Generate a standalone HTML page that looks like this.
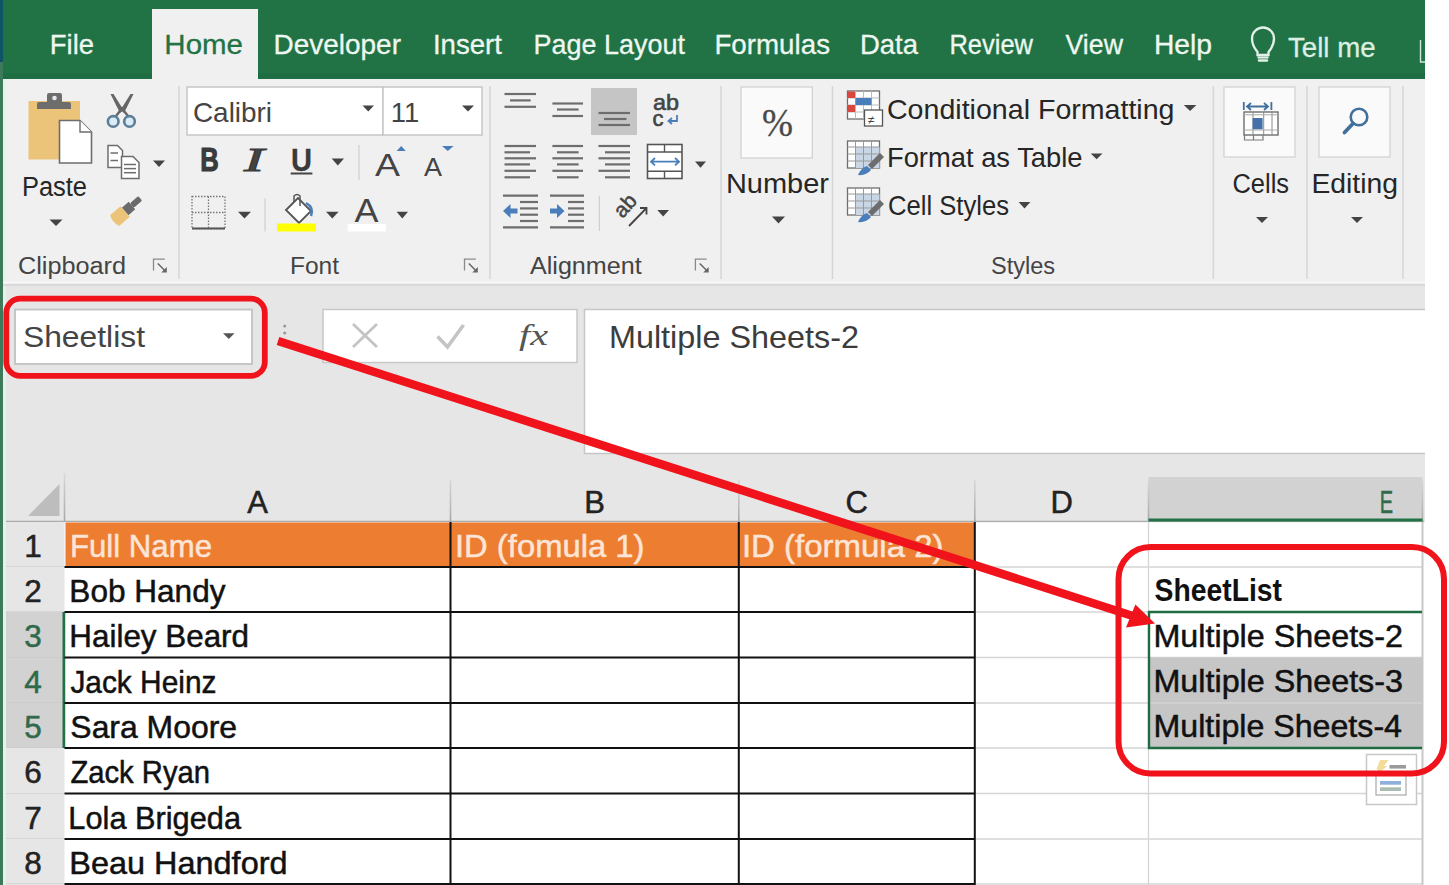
<!DOCTYPE html>
<html><head><meta charset="utf-8"><style>
html,body{margin:0;padding:0;background:#fff;width:1449px;height:885px;overflow:hidden}
svg{display:block}
text{font-family:"Liberation Sans", sans-serif;}
</style></head><body>
<svg width="1449" height="885" viewBox="0 0 1449 885">
<defs><linearGradient id="sepg" x1="0" y1="0" x2="0" y2="1"><stop offset="0" stop-color="#d8d8d8"/><stop offset="1" stop-color="#a8a8a8"/></linearGradient></defs>
<rect x="0" y="0" width="1449" height="885" fill="#ffffff" />
<rect x="0" y="0" width="1425" height="79" fill="#217346" />
<rect x="0" y="0" width="3" height="62" fill="#0f5466" />
<rect x="3" y="73" width="1422" height="6" fill="#1f6d42" />
<rect x="152" y="9" width="106" height="70" fill="#f0f0f0" />
<text x="49.84" y="53.5" font-size="28.5" fill="#eef7f0" font-weight="normal" text-anchor="start" textLength="44.24" lengthAdjust="spacingAndGlyphs"  style="stroke:#eef7f0;stroke-width:0.3">File</text>
<text x="273.46" y="53.5" font-size="28.5" fill="#eef7f0" font-weight="normal" text-anchor="start" textLength="127.54" lengthAdjust="spacingAndGlyphs"  style="stroke:#eef7f0;stroke-width:0.3">Developer</text>
<text x="432.95" y="53.5" font-size="28.5" fill="#eef7f0" font-weight="normal" text-anchor="start" textLength="69.04" lengthAdjust="spacingAndGlyphs"  style="stroke:#eef7f0;stroke-width:0.3">Insert</text>
<text x="533.46" y="53.5" font-size="28.5" fill="#eef7f0" font-weight="normal" text-anchor="start" textLength="151.54" lengthAdjust="spacingAndGlyphs"  style="stroke:#eef7f0;stroke-width:0.3">Page Layout</text>
<text x="714.42" y="53.5" font-size="28.5" fill="#eef7f0" font-weight="normal" text-anchor="start" textLength="115.6" lengthAdjust="spacingAndGlyphs"  style="stroke:#eef7f0;stroke-width:0.3">Formulas</text>
<text x="859.93" y="53.5" font-size="28.5" fill="#eef7f0" font-weight="normal" text-anchor="start" textLength="58.07" lengthAdjust="spacingAndGlyphs"  style="stroke:#eef7f0;stroke-width:0.3">Data</text>
<text x="949.46" y="53.5" font-size="28.5" fill="#eef7f0" font-weight="normal" text-anchor="start" textLength="83.54" lengthAdjust="spacingAndGlyphs"  style="stroke:#eef7f0;stroke-width:0.3">Review</text>
<text x="1065.5" y="53.5" font-size="28.5" fill="#eef7f0" font-weight="normal" text-anchor="start" textLength="57.5" lengthAdjust="spacingAndGlyphs"  style="stroke:#eef7f0;stroke-width:0.3">View</text>
<text x="1153.89" y="53.5" font-size="28.5" fill="#eef7f0" font-weight="normal" text-anchor="start" textLength="58.12" lengthAdjust="spacingAndGlyphs"  style="stroke:#eef7f0;stroke-width:0.3">Help</text>
<text x="164.39" y="53.5" font-size="28.5" fill="#217346" font-weight="normal" text-anchor="start" textLength="78.65" lengthAdjust="spacingAndGlyphs"  style="stroke:#217346;stroke-width:0.3">Home</text>
<text x="1287.99" y="57.3" font-size="28.5" fill="#dcefe2" font-weight="normal" text-anchor="start" textLength="87.54" lengthAdjust="spacingAndGlyphs"  style="stroke:#dcefe2;stroke-width:0.3">Tell me</text>
<rect x="3" y="79" width="1422" height="204" fill="#f0f0f0" />
<rect x="0" y="62" width="3" height="823" fill="#3d7a5c" />
<rect x="3" y="79" width="3" height="806" fill="#e4f2ea" />
<rect x="6" y="283" width="1419" height="239" fill="#e6e6e6" />
<line x1="3" y1="282.5" x2="1425" y2="282.5" stroke="#f7f7f7" stroke-width="2" />
<line x1="3" y1="285" x2="1425" y2="285" stroke="#d6d6d6" stroke-width="1.6" />
<line x1="179" y1="86" x2="179" y2="279" stroke="#d6d6d6" stroke-width="1.5" />
<line x1="490" y1="86" x2="490" y2="279" stroke="#d6d6d6" stroke-width="1.5" />
<line x1="721" y1="86" x2="721" y2="279" stroke="#d6d6d6" stroke-width="1.5" />
<line x1="832.5" y1="86" x2="832.5" y2="279" stroke="#d6d6d6" stroke-width="1.5" />
<line x1="1213.3" y1="86" x2="1213.3" y2="279" stroke="#d6d6d6" stroke-width="1.5" />
<line x1="1307" y1="86" x2="1307" y2="279" stroke="#d6d6d6" stroke-width="1.5" />
<line x1="1403" y1="86" x2="1403" y2="279" stroke="#d6d6d6" stroke-width="1.5" />
<text x="17.95" y="274" font-size="23.5" fill="#444" font-weight="normal" text-anchor="start" textLength="108.07" lengthAdjust="spacingAndGlyphs"  style="">Clipboard</text>
<text x="289.91" y="274" font-size="23.5" fill="#444" font-weight="normal" text-anchor="start" textLength="49.09" lengthAdjust="spacingAndGlyphs"  style="">Font</text>
<text x="530.0" y="274" font-size="23.5" fill="#444" font-weight="normal" text-anchor="start" textLength="111.6" lengthAdjust="spacingAndGlyphs"  style="">Alignment</text>
<text x="990.94" y="274" font-size="23.5" fill="#444" font-weight="normal" text-anchor="start" textLength="64.11" lengthAdjust="spacingAndGlyphs"  style="">Styles</text>
<path d="M153.5,270.5 V259.2 H164.8" stroke="#8a8a8a" stroke-width="1.3" fill="none"/>
<path d="M157.8,263.5 L164.8,270.5" stroke="#666" stroke-width="1.5"/>
<polygon points="166.8,267.0 166.8,272.5 161.3,272.5" fill="#666"/>
<path d="M464.5,270.5 V259.2 H475.8" stroke="#8a8a8a" stroke-width="1.3" fill="none"/>
<path d="M468.8,263.5 L475.8,270.5" stroke="#666" stroke-width="1.5"/>
<polygon points="477.8,267.0 477.8,272.5 472.3,272.5" fill="#666"/>
<path d="M695.4000000000001,270.5 V259.2 H706.7" stroke="#8a8a8a" stroke-width="1.3" fill="none"/>
<path d="M699.7,263.5 L706.7,270.5" stroke="#666" stroke-width="1.5"/>
<polygon points="708.7,267.0 708.7,272.5 703.2,272.5" fill="#666"/>
<rect x="28.5" y="101" width="51.5" height="58.5" fill="#ebc47a" />
<path d="M37,109 V104 Q37,102 39,102 H47 V95 Q47,93 49,93 H60 Q62,93 62,95 V102 H69 Q71,102 71,104 V109 Z" fill="#6d6d6d"/>
<circle cx="54.5" cy="98" r="2.3" fill="#e8e8e8"/>
<path d="M59.5,120.5 H80 L91.5,132 V163 H59.5 Z" fill="#ffffff" stroke="#6d6d6d" stroke-width="1.6"/>
<path d="M80,120.5 V132 H91.5" fill="#ffffff" stroke="#6d6d6d" stroke-width="1.4"/>
<text x="21.9" y="196" font-size="27" fill="#262626" font-weight="normal" text-anchor="start" textLength="65.15" lengthAdjust="spacingAndGlyphs"  style="">Paste</text>
<polygon points="49.5,219.5 62.5,219.5 56.0,226" fill="#444"/>
<path d="M110.5,94 L113.5,94 L123.5,110 L120,113 Z" fill="#666"/>
<path d="M133.5,94 L130.5,94 L120.5,110 L124,113 Z" fill="#666"/>
<path d="M116,116 L122,108.5 L128,116" fill="none" stroke="#666" stroke-width="2.4"/>
<circle cx="113.2" cy="121.4" r="5.3" fill="#dcecf7" stroke="#5b7f99" stroke-width="2.6"/>
<circle cx="129.5" cy="121.4" r="5.3" fill="#dcecf7" stroke="#5b7f99" stroke-width="2.6"/>
<path d="M108,145.5 H117.5 L122.5,150.5 V167.5 H108 Z" fill="#fff" stroke="#6d6d6d" stroke-width="1.5"/>
<path d="M121.5,156.5 H133 L139,162.5 V178.5 H121.5 Z" fill="#fff" stroke="#6d6d6d" stroke-width="1.5"/>
<line x1="110.5" y1="153" x2="118" y2="153" stroke="#6d6d6d" stroke-width="1.5" />
<line x1="110.5" y1="160.5" x2="118" y2="160.5" stroke="#6d6d6d" stroke-width="1.5" />
<line x1="124" y1="164.5" x2="136" y2="164.5" stroke="#6d6d6d" stroke-width="1.5" />
<line x1="124" y1="168.6" x2="136" y2="168.6" stroke="#6d6d6d" stroke-width="1.5" />
<line x1="124" y1="172.7" x2="136" y2="172.7" stroke="#6d6d6d" stroke-width="1.5" />
<polygon points="153,160.5 165,160.5 159.0,167" fill="#444"/>
<g transform="translate(139.5,199) rotate(139)"><rect x="-1" y="-3" width="11" height="6" rx="1.5" fill="#6a6a6a"/><rect x="10" y="-5" width="9" height="10" fill="#6a6a6a"/><path d="M19,-7 H33 Q36,0 33,7 H19 Z" fill="#ebc47a"/></g>
<rect x="187" y="87" width="196" height="48" fill="#ffffff" stroke="#c6c6c6" stroke-width="1.5" />
<rect x="383" y="87" width="99" height="48" fill="#ffffff" stroke="#c6c6c6" stroke-width="1.5" />
<text x="192.96" y="121.7" font-size="28.5" fill="#444" font-weight="normal" text-anchor="start" textLength="79.12" lengthAdjust="spacingAndGlyphs"  style="">Calibri</text>
<text x="390.73" y="121.7" font-size="28.5" fill="#444" font-weight="normal" text-anchor="start" textLength="28.41" lengthAdjust="spacingAndGlyphs"  style="">11</text>
<polygon points="362.5,105.5 374,105.5 368.25,111.5" fill="#444"/>
<polygon points="462,105.5 474,105.5 468.0,111.5" fill="#444"/>
<text x="200.3" y="171.3" font-size="33.5" fill="#3a3a3a" font-weight="bold" text-anchor="start" textLength="18.5" lengthAdjust="spacingAndGlyphs"  style="stroke:#3a3a3a;stroke-width:1.1">B</text>
<text x="244" y="171" font-size="33" fill="#444" font-family='"Liberation Sans", sans-serif' font-style="italic" textLength="20" lengthAdjust="spacingAndGlyphs" style="font-family:'Liberation Serif',serif;stroke:#3a3a3a;stroke-width:1">I</text>
<text x="291" y="171" font-size="31.5" fill="#3a3a3a" font-weight="bold" text-anchor="start" textLength="21" lengthAdjust="spacingAndGlyphs"  style="stroke:#3a3a3a;stroke-width:0.3">U</text>
<line x1="290.7" y1="173.5" x2="312.4" y2="173.5" stroke="#444" stroke-width="2" />
<polygon points="331.7,158.6 344,158.6 337.85,165.4" fill="#444"/>
<line x1="359" y1="145" x2="359" y2="180" stroke="#cfcfcf" stroke-width="1.2" />
<text x="375" y="175.7" font-size="31" fill="#444" font-weight="normal" text-anchor="start" textLength="25" lengthAdjust="spacingAndGlyphs"  style="">A</text>
<polygon points="396.6,151 405.8,151 401.2,146" fill="#4a7ebb"/>
<text x="424" y="175.7" font-size="26" fill="#444" font-weight="normal" text-anchor="start" textLength="18" lengthAdjust="spacingAndGlyphs"  style="">A</text>
<polygon points="442,146 453.6,146 447.8,151" fill="#4a7ebb"/>
<rect x="192" y="196.5" width="33" height="32" fill="none" stroke="#777" stroke-width="1.3" stroke-dasharray="1.5,1.5"/>
<line x1="208.5" y1="196.5" x2="208.5" y2="228.5" stroke="#777" stroke-width="1.3" stroke-dasharray="1.5,1.5"/>
<line x1="192" y1="212.5" x2="225" y2="212.5" stroke="#777" stroke-width="1.3" stroke-dasharray="1.5,1.5"/>
<line x1="192" y1="228.5" x2="225" y2="228.5" stroke="#555" stroke-width="1.8" />
<polygon points="238,211.7 251,211.7 244.5,218.5" fill="#444"/>
<line x1="265" y1="198.5" x2="265" y2="231.5" stroke="#cfcfcf" stroke-width="1.2" />
<path d="M286,210 L298,198 L311,211 L299,223 Z" fill="#fff" stroke="#555" stroke-width="1.8"/>
<path d="M294,202 V196 Q297,193 300,196 V206" fill="none" stroke="#555" stroke-width="1.5"/>
<path d="M306,203 Q314,207 311,216" fill="none" stroke="#4a7ebb" stroke-width="2.5"/>
<rect x="277" y="223.5" width="39" height="8" fill="#ffff00" />
<polygon points="326,211.7 338.6,211.7 332.3,218.5" fill="#444"/>
<text x="354.5" y="222.4" font-size="33" fill="#444" font-weight="normal" text-anchor="start" textLength="24" lengthAdjust="spacingAndGlyphs"  style="">A</text>
<rect x="347.7" y="224" width="38.3" height="7.5" fill="#ffffff" />
<polygon points="396.6,211.7 408,211.7 402.3,218.5" fill="#444"/>
<line x1="504.5" y1="94" x2="536" y2="94" stroke="#6d6d6d" stroke-width="2.2" />
<line x1="510" y1="100.4" x2="530.7" y2="100.4" stroke="#6d6d6d" stroke-width="2.2" />
<line x1="504.5" y1="106.8" x2="536" y2="106.8" stroke="#6d6d6d" stroke-width="2.2" />
<line x1="552.4" y1="103.5" x2="583" y2="103.5" stroke="#6d6d6d" stroke-width="2.2" />
<line x1="557" y1="109.5" x2="578.6" y2="109.5" stroke="#6d6d6d" stroke-width="2.2" />
<line x1="552.4" y1="116" x2="583" y2="116" stroke="#6d6d6d" stroke-width="2.2" />
<rect x="591" y="88" width="46" height="47" fill="#c5c5c5" />
<line x1="598.5" y1="113" x2="630" y2="113" stroke="#6d6d6d" stroke-width="2.2" />
<line x1="604" y1="119" x2="626.5" y2="119" stroke="#6d6d6d" stroke-width="2.2" />
<line x1="598.5" y1="125" x2="630" y2="125" stroke="#6d6d6d" stroke-width="2.2" />
<text x="653" y="109.8" font-size="22" fill="#444" font-weight="normal" text-anchor="start" textLength="26" lengthAdjust="spacingAndGlyphs"  style="stroke:#444;stroke-width:0.6">ab</text>
<text x="652.5" y="126" font-size="22" fill="#444" font-weight="normal" text-anchor="start" textLength="11" lengthAdjust="spacingAndGlyphs"  style="stroke:#444;stroke-width:0.6">c</text>
<path d="M677,115 V121 H669 M672,118 L668.5,121 L672,124" fill="none" stroke="#4a7ebb" stroke-width="1.8"/>
<line x1="504.5" y1="146" x2="536" y2="146" stroke="#6d6d6d" stroke-width="2.2" />
<line x1="504.5" y1="152.3" x2="530" y2="152.3" stroke="#6d6d6d" stroke-width="2.2" />
<line x1="504.5" y1="158.3" x2="536" y2="158.3" stroke="#6d6d6d" stroke-width="2.2" />
<line x1="504.5" y1="164.4" x2="530" y2="164.4" stroke="#6d6d6d" stroke-width="2.2" />
<line x1="504.5" y1="170.8" x2="536" y2="170.8" stroke="#6d6d6d" stroke-width="2.2" />
<line x1="504.5" y1="177.3" x2="530" y2="177.3" stroke="#6d6d6d" stroke-width="2.2" />
<line x1="552.4" y1="146" x2="583" y2="146" stroke="#6d6d6d" stroke-width="2.2" />
<line x1="557" y1="152.3" x2="578.6" y2="152.3" stroke="#6d6d6d" stroke-width="2.2" />
<line x1="552.4" y1="158.3" x2="583" y2="158.3" stroke="#6d6d6d" stroke-width="2.2" />
<line x1="557" y1="164.4" x2="578.6" y2="164.4" stroke="#6d6d6d" stroke-width="2.2" />
<line x1="552.4" y1="170.8" x2="583" y2="170.8" stroke="#6d6d6d" stroke-width="2.2" />
<line x1="557" y1="177.3" x2="578.6" y2="177.3" stroke="#6d6d6d" stroke-width="2.2" />
<line x1="598.5" y1="146" x2="630" y2="146" stroke="#6d6d6d" stroke-width="2.2" />
<line x1="605" y1="152.3" x2="630" y2="152.3" stroke="#6d6d6d" stroke-width="2.2" />
<line x1="598.5" y1="158.3" x2="630" y2="158.3" stroke="#6d6d6d" stroke-width="2.2" />
<line x1="605" y1="164.4" x2="630" y2="164.4" stroke="#6d6d6d" stroke-width="2.2" />
<line x1="598.5" y1="170.8" x2="630" y2="170.8" stroke="#6d6d6d" stroke-width="2.2" />
<line x1="605" y1="177.3" x2="630" y2="177.3" stroke="#6d6d6d" stroke-width="2.2" />
<rect x="647.5" y="144.5" width="34.5" height="34" fill="#fff" stroke="#555" stroke-width="1.6"/>
<line x1="647.5" y1="152" x2="682" y2="152" stroke="#555" stroke-width="1.4" />
<line x1="647.5" y1="171.3" x2="682" y2="171.3" stroke="#555" stroke-width="1.4" />
<line x1="664.5" y1="144.5" x2="664.5" y2="152" stroke="#555" stroke-width="1.4" />
<line x1="664.5" y1="171.3" x2="664.5" y2="178.5" stroke="#555" stroke-width="1.4" />
<path d="M652,161.7 H678 M655,158 L651,161.7 L655,165.4 M675,158 L679,161.7 L675,165.4" fill="none" stroke="#4a7ebb" stroke-width="1.8"/>
<polygon points="695,161.4 706,161.4 700.5,167.7" fill="#444"/>
<line x1="503" y1="195.7" x2="538" y2="195.7" stroke="#6d6d6d" stroke-width="2.2" />
<line x1="520" y1="202" x2="538" y2="202" stroke="#6d6d6d" stroke-width="2.2" />
<line x1="520" y1="208.4" x2="538" y2="208.4" stroke="#6d6d6d" stroke-width="2.2" />
<line x1="520" y1="214.7" x2="538" y2="214.7" stroke="#6d6d6d" stroke-width="2.2" />
<line x1="520" y1="221" x2="538" y2="221" stroke="#6d6d6d" stroke-width="2.2" />
<line x1="503" y1="227.4" x2="538" y2="227.4" stroke="#6d6d6d" stroke-width="2.2" />
<polygon points="503,211 510.5,204 510.5,208.5 517.5,208.5 517.5,213.5 510.5,213.5 510.5,218" fill="#4a7ebb"/>
<line x1="550" y1="195.7" x2="584" y2="195.7" stroke="#6d6d6d" stroke-width="2.2" />
<line x1="568" y1="202" x2="584" y2="202" stroke="#6d6d6d" stroke-width="2.2" />
<line x1="568" y1="208.4" x2="584" y2="208.4" stroke="#6d6d6d" stroke-width="2.2" />
<line x1="568" y1="214.7" x2="584" y2="214.7" stroke="#6d6d6d" stroke-width="2.2" />
<line x1="568" y1="221" x2="584" y2="221" stroke="#6d6d6d" stroke-width="2.2" />
<line x1="550" y1="227.4" x2="584" y2="227.4" stroke="#6d6d6d" stroke-width="2.2" />
<polygon points="564.5,211 557,204 557,208.5 550,208.5 550,213.5 557,213.5 557,218" fill="#4a7ebb"/>
<line x1="599.4" y1="195.7" x2="599.4" y2="231" stroke="#cfcfcf" stroke-width="1.2" />
<text x="0" y="0" font-size="21" fill="#444" transform="translate(622.5,219) rotate(-48)" style="font-family:'Liberation Sans',sans-serif;stroke:#444;stroke-width:0.5">ab</text>
<path d="M629,226 L646.5,208 M640,208 L646.5,208 L646.5,214.5" fill="none" stroke="#444" stroke-width="1.8"/>
<polygon points="657.3,210 669,210 663.15,216.5" fill="#444"/>
<rect x="741" y="87" width="71.3" height="71" fill="#fafafa" stroke="#d0d0d0" stroke-width="1.2" />
<text x="762" y="135.8" font-size="39" fill="#4a4a4a" textLength="31" lengthAdjust="spacingAndGlyphs" style="font-family:'Liberation Serif',serif;stroke:#4a4a4a;stroke-width:0.3">%</text>
<text x="725.96" y="192.8" font-size="27" fill="#262626" font-weight="normal" text-anchor="start" textLength="103.04" lengthAdjust="spacingAndGlyphs"  style="">Number</text>
<polygon points="772,216.5 785,216.5 778.5,223.6" fill="#444"/>
<text x="886.99" y="118.8" font-size="27.5" fill="#262626" font-weight="normal" text-anchor="start" textLength="287.53" lengthAdjust="spacingAndGlyphs"  style="">Conditional Formatting</text>
<polygon points="1183.8,105 1196.4,105 1190.1,111" fill="#444"/>
<text x="886.96" y="166.5" font-size="27.5" fill="#262626" font-weight="normal" text-anchor="start" textLength="195.55" lengthAdjust="spacingAndGlyphs"  style="">Format as Table</text>
<polygon points="1090.7,153.4 1102.5,153.4 1096.6,159.2" fill="#444"/>
<text x="887.99" y="215" font-size="27.5" fill="#262626" font-weight="normal" text-anchor="start" textLength="121.03" lengthAdjust="spacingAndGlyphs"  style="">Cell Styles</text>
<polygon points="1018.6,202 1030.4,202 1024.5,208.5" fill="#444"/>
<rect x="847.5" y="91" width="32" height="28" fill="#fff" stroke="#6d6d6d" stroke-width="1.3"/>
<line x1="855.5" y1="91" x2="855.5" y2="119" stroke="#bbb" stroke-width="1" />
<line x1="863.5" y1="91" x2="863.5" y2="119" stroke="#bbb" stroke-width="1" />
<line x1="871.5" y1="91" x2="871.5" y2="119" stroke="#bbb" stroke-width="1" />
<line x1="847.5" y1="98" x2="879.5" y2="98" stroke="#bbb" stroke-width="1" />
<line x1="847.5" y1="105" x2="879.5" y2="105" stroke="#bbb" stroke-width="1" />
<line x1="847.5" y1="112" x2="879.5" y2="112" stroke="#bbb" stroke-width="1" />
<rect x="848" y="91.5" width="7" height="6.5" fill="#d9473f" />
<rect x="848" y="105" width="7" height="7" fill="#d9473f" />
<rect x="855.5" y="98" width="16" height="7" fill="#4a7ebb" />
<rect x="864.5" y="110" width="18" height="16" fill="#fff" stroke="#555" stroke-width="1.3"/>
<text x="868" y="123.5" font-size="12" fill="#444" font-weight="normal" text-anchor="start"  style="">≠</text>
<rect x="847.5" y="141" width="32" height="27" fill="#fff" stroke="#6d6d6d" stroke-width="1.3"/>
<rect x="855" y="147" width="24.5" height="21" fill="#c9d6e6" />
<line x1="855.5" y1="141" x2="855.5" y2="168" stroke="#999" stroke-width="1" />
<line x1="863.5" y1="141" x2="863.5" y2="168" stroke="#999" stroke-width="1" />
<line x1="871.5" y1="141" x2="871.5" y2="168" stroke="#999" stroke-width="1" />
<line x1="847.5" y1="147" x2="879.5" y2="147" stroke="#999" stroke-width="1" />
<line x1="847.5" y1="154" x2="879.5" y2="154" stroke="#999" stroke-width="1" />
<line x1="847.5" y1="161" x2="879.5" y2="161" stroke="#999" stroke-width="1" />
<path d="M880,153 L884,157 L872,169 L868,165 Z" fill="#6d6d6d"/>
<path d="M867,166 L871,170 Q866,176 858,175 Q861,168 867,166 Z" fill="#4a7ebb"/>
<rect x="847.5" y="188" width="32" height="27" fill="#fff" stroke="#6d6d6d" stroke-width="1.3"/>
<rect x="855" y="194" width="24.5" height="21" fill="#c9d6e6" />
<line x1="855.5" y1="188" x2="855.5" y2="215" stroke="#999" stroke-width="1" />
<line x1="863.5" y1="188" x2="863.5" y2="215" stroke="#999" stroke-width="1" />
<line x1="871.5" y1="188" x2="871.5" y2="215" stroke="#999" stroke-width="1" />
<line x1="847.5" y1="194" x2="879.5" y2="194" stroke="#999" stroke-width="1" />
<line x1="847.5" y1="201" x2="879.5" y2="201" stroke="#999" stroke-width="1" />
<line x1="847.5" y1="208" x2="879.5" y2="208" stroke="#999" stroke-width="1" />
<path d="M880,200 L884,204 L872,216 L868,212 Z" fill="#6d6d6d"/>
<path d="M867,213 L871,217 Q866,223 858,222 Q861,215 867,213 Z" fill="#4a7ebb"/>
<rect x="1224" y="87" width="71" height="70" fill="#fafafa" stroke="#d0d0d0" stroke-width="1.2" />
<rect x="1319" y="87" width="71" height="70" fill="#fafafa" stroke="#d0d0d0" stroke-width="1.2" />
<text x="1232.44" y="192.7" font-size="27" fill="#262626" font-weight="normal" text-anchor="start" textLength="56.6" lengthAdjust="spacingAndGlyphs"  style="">Cells</text>
<text x="1311.4" y="192.7" font-size="27" fill="#262626" font-weight="normal" text-anchor="start" textLength="86.58" lengthAdjust="spacingAndGlyphs"  style="">Editing</text>
<polygon points="1256,217 1268,217 1262.0,223" fill="#444"/>
<polygon points="1351,217 1363,217 1357.0,223" fill="#444"/>
<rect x="1244" y="112" width="34" height="23" fill="#fff" stroke="#6d6d6d" stroke-width="1.4"/>
<line x1="1253" y1="112" x2="1253" y2="135" stroke="#8a8a8a" stroke-width="1" />
<line x1="1263.7" y1="112" x2="1263.7" y2="135" stroke="#8a8a8a" stroke-width="1" />
<line x1="1272" y1="112" x2="1272" y2="135" stroke="#8a8a8a" stroke-width="1" />
<line x1="1244" y1="114.8" x2="1278" y2="114.8" stroke="#aaa" stroke-width="1" />
<line x1="1244" y1="130" x2="1278" y2="130" stroke="#aaa" stroke-width="1" />
<rect x="1252.6" y="118" width="10" height="11.2" fill="#4472a8" />
<path d="M1244.5,135 V140 H1253.5 V135 M1253.5,140 H1263 V135" fill="none" stroke="#7a7a7a" stroke-width="1.2"/>
<path d="M1243.8,102 V110 M1271.4,102 V110 M1247,106.5 H1268 M1251,103 L1247,106.5 L1251,110 M1264,103 L1268,106.5 L1264,110" fill="none" stroke="#41709c" stroke-width="1.8"/>
<circle cx="1359" cy="117" r="8.3" fill="none" stroke="#41709c" stroke-width="2.6"/>
<path d="M1353,123.5 L1344.5,132.5" stroke="#41709c" stroke-width="3.8" stroke-linecap="round"/>
<path d="M1257.5,52 Q1252,45.5 1252,38.5 A11,11 0 0 1 1274,38.5 Q1274,45.5 1268.5,52 V55 H1257.5 Z" fill="none" stroke="#e3f1e7" stroke-width="2.3"/>
<line x1="1257.5" y1="57.5" x2="1268.5" y2="57.5" stroke="#e3f1e7" stroke-width="2.2" />
<path d="M1259,60.5 H1267" stroke="#e3f1e7" stroke-width="2.4" stroke-linecap="round"/>
<path d="M1420.5,40 V62 H1425" fill="none" stroke="#cfe5d6" stroke-width="1.4"/>
<rect x="15" y="309.5" width="237" height="54.5" fill="#ffffff" stroke="#c6c6c6" stroke-width="2" />
<text x="22.96" y="347" font-size="29.5" fill="#444" font-weight="normal" text-anchor="start" textLength="122.03" lengthAdjust="spacingAndGlyphs"  style="">Sheetlist</text>
<polygon points="223,333.3 234.6,333.3 228.8,339" fill="#555"/>
<circle cx="284.7" cy="326" r="1.6" fill="#9a9a9a"/><circle cx="284.7" cy="333" r="1.6" fill="#9a9a9a"/>
<rect x="323" y="309.5" width="254" height="53" fill="#ffffff" stroke="#c8c8c8" stroke-width="1.5" />
<path d="M353,324 L377,347 M377,324 L353,347" stroke="#c4c4c4" stroke-width="2.8"/>
<path d="M437.5,336.5 L447.5,347 L463.5,325" fill="none" stroke="#c4c4c4" stroke-width="3.6"/>
<text x="519" y="345" font-size="30" fill="#555" font-style="italic" textLength="29" lengthAdjust="spacingAndGlyphs" style="font-family:'Liberation Serif',serif">fx</text>
<rect x="584.5" y="309.5" width="900" height="144" fill="#ffffff" stroke="#c6c6c6" stroke-width="1.5" />
<text x="608.95" y="347.6" font-size="31.5" fill="#3c3c3c" font-weight="normal" text-anchor="start" textLength="250.07" lengthAdjust="spacingAndGlyphs"  style="">Multiple Sheets-2</text>
<rect x="1148.5" y="477" width="274" height="44.5" fill="#d2d2d2" />
<rect x="63.7" y="473" width="1.6" height="48.5" fill="url(#sepg)"/>
<rect x="449.7" y="480" width="1.6" height="41.5" fill="url(#sepg)"/>
<rect x="738.0" y="480" width="1.6" height="41.5" fill="url(#sepg)"/>
<rect x="974.0" y="480" width="1.6" height="41.5" fill="url(#sepg)"/>
<rect x="1147.7" y="480" width="1.6" height="41.5" fill="url(#sepg)"/>
<rect x="1421.7" y="480" width="1.6" height="41.5" fill="url(#sepg)"/>
<line x1="6" y1="521.5" x2="1424" y2="521.5" stroke="#ababab" stroke-width="1.5" />
<line x1="1148.5" y1="520" x2="1422.5" y2="520" stroke="#217346" stroke-width="3" />
<polygon points="28,516 59.5,484 59.5,516" fill="#bdbdbd"/>
<text x="257.5" y="513.4" font-size="31" fill="#222" font-weight="normal" text-anchor="middle"  style="stroke:#222;stroke-width:0.5">A</text>
<text x="594.65" y="513.4" font-size="31" fill="#222" font-weight="normal" text-anchor="middle"  style="stroke:#222;stroke-width:0.5">B</text>
<text x="856.8" y="513.4" font-size="31" fill="#222" font-weight="normal" text-anchor="middle"  style="stroke:#222;stroke-width:0.5">C</text>
<text x="1061.65" y="513.4" font-size="31" fill="#222" font-weight="normal" text-anchor="middle"  style="stroke:#222;stroke-width:0.5">D</text>
<text x="1379.67" y="513.4" font-size="31" fill="#2f6a4a" font-weight="normal" text-anchor="start" textLength="13.33" lengthAdjust="spacingAndGlyphs"  style="stroke:#2f6a4a;stroke-width:0.5">E</text>
<rect x="6" y="522" width="58.5" height="45" fill="#e6e6e6" />
<line x1="6" y1="567" x2="64.5" y2="567" stroke="#c6c6c6" stroke-width="1.2" />
<text x="33" y="556.7" font-size="31.5" fill="#222" font-weight="normal" text-anchor="middle"  style="stroke:#222;stroke-width:0.5">1</text>
<rect x="6" y="567" width="58.5" height="45" fill="#e6e6e6" />
<line x1="6" y1="612" x2="64.5" y2="612" stroke="#c6c6c6" stroke-width="1.2" />
<text x="33" y="601.7" font-size="31.5" fill="#222" font-weight="normal" text-anchor="middle"  style="stroke:#222;stroke-width:0.5">2</text>
<rect x="6" y="612" width="58.5" height="45.5" fill="#d2d2d2" />
<line x1="6" y1="657.5" x2="64.5" y2="657.5" stroke="#c6c6c6" stroke-width="1.2" />
<text x="33" y="647.2" font-size="31.5" fill="#2f6a4a" font-weight="normal" text-anchor="middle"  style="stroke:#2f6a4a;stroke-width:0.5">3</text>
<rect x="6" y="657.5" width="58.5" height="45.5" fill="#d2d2d2" />
<line x1="6" y1="703" x2="64.5" y2="703" stroke="#c6c6c6" stroke-width="1.2" />
<text x="33" y="692.7" font-size="31.5" fill="#2f6a4a" font-weight="normal" text-anchor="middle"  style="stroke:#2f6a4a;stroke-width:0.5">4</text>
<rect x="6" y="703" width="58.5" height="45" fill="#d2d2d2" />
<line x1="6" y1="748" x2="64.5" y2="748" stroke="#c6c6c6" stroke-width="1.2" />
<text x="33" y="737.7" font-size="31.5" fill="#2f6a4a" font-weight="normal" text-anchor="middle"  style="stroke:#2f6a4a;stroke-width:0.5">5</text>
<rect x="6" y="748" width="58.5" height="45.5" fill="#e6e6e6" />
<line x1="6" y1="793.5" x2="64.5" y2="793.5" stroke="#c6c6c6" stroke-width="1.2" />
<text x="33" y="783.2" font-size="31.5" fill="#222" font-weight="normal" text-anchor="middle"  style="stroke:#222;stroke-width:0.5">6</text>
<rect x="6" y="793.5" width="58.5" height="45.5" fill="#e6e6e6" />
<line x1="6" y1="839" x2="64.5" y2="839" stroke="#c6c6c6" stroke-width="1.2" />
<text x="33" y="828.7" font-size="31.5" fill="#222" font-weight="normal" text-anchor="middle"  style="stroke:#222;stroke-width:0.5">7</text>
<rect x="6" y="839" width="58.5" height="45" fill="#e6e6e6" />
<line x1="6" y1="884" x2="64.5" y2="884" stroke="#c6c6c6" stroke-width="1.2" />
<text x="33" y="873.7" font-size="31.5" fill="#222" font-weight="normal" text-anchor="middle"  style="stroke:#222;stroke-width:0.5">8</text>
<line x1="64" y1="612" x2="64" y2="748" stroke="#217346" stroke-width="3" />
<rect x="65.5" y="522.5" width="1357" height="362" fill="#ffffff" />
<line x1="974.8" y1="567" x2="1422.5" y2="567" stroke="#d4d4d4" stroke-width="1.3" />
<line x1="974.8" y1="612" x2="1422.5" y2="612" stroke="#d4d4d4" stroke-width="1.3" />
<line x1="974.8" y1="657.5" x2="1422.5" y2="657.5" stroke="#d4d4d4" stroke-width="1.3" />
<line x1="974.8" y1="703" x2="1422.5" y2="703" stroke="#d4d4d4" stroke-width="1.3" />
<line x1="974.8" y1="748" x2="1422.5" y2="748" stroke="#d4d4d4" stroke-width="1.3" />
<line x1="974.8" y1="793.5" x2="1422.5" y2="793.5" stroke="#d4d4d4" stroke-width="1.3" />
<line x1="974.8" y1="839" x2="1422.5" y2="839" stroke="#d4d4d4" stroke-width="1.3" />
<line x1="974.8" y1="884" x2="1422.5" y2="884" stroke="#d4d4d4" stroke-width="1.3" />
<line x1="1148.5" y1="522" x2="1148.5" y2="885" stroke="#d4d4d4" stroke-width="1.3" />
<line x1="1422.5" y1="522" x2="1422.5" y2="885" stroke="#c8c8c8" stroke-width="2" />
<rect x="65.5" y="522.5" width="909.3" height="44.5" fill="#ed7d31" />
<line x1="64.5" y1="567" x2="974.8" y2="567" stroke="#111" stroke-width="2" />
<line x1="64.5" y1="612" x2="974.8" y2="612" stroke="#111" stroke-width="2" />
<line x1="64.5" y1="657.5" x2="974.8" y2="657.5" stroke="#111" stroke-width="2" />
<line x1="64.5" y1="703" x2="974.8" y2="703" stroke="#111" stroke-width="2" />
<line x1="64.5" y1="748" x2="974.8" y2="748" stroke="#111" stroke-width="2" />
<line x1="64.5" y1="793.5" x2="974.8" y2="793.5" stroke="#111" stroke-width="2" />
<line x1="64.5" y1="839" x2="974.8" y2="839" stroke="#111" stroke-width="2" />
<line x1="64.5" y1="884" x2="974.8" y2="884" stroke="#111" stroke-width="2" />
<line x1="450.5" y1="522" x2="450.5" y2="885" stroke="#111" stroke-width="2" />
<line x1="738.8" y1="522" x2="738.8" y2="885" stroke="#111" stroke-width="2" />
<line x1="974.8" y1="522" x2="974.8" y2="885" stroke="#111" stroke-width="2" />
<rect x="1149.5" y="657.5" width="273" height="90.5" fill="#c6c6c6" />
<line x1="1149.5" y1="703" x2="1422" y2="703" stroke="#d9d9d9" stroke-width="1.2" />
<path d="M1422,612 H1149 V748 H1422" fill="none" stroke="#1f6b42" stroke-width="2.4"/>
<text x="69.95" y="557.3" font-size="31.5" fill="#fce4d6" font-weight="normal" text-anchor="start" textLength="142.07" lengthAdjust="spacingAndGlyphs"  style="stroke:#fce4d6;stroke-width:0.5">Full Name</text>
<text x="454.94" y="557.3" font-size="31.5" fill="#fce4d6" font-weight="normal" text-anchor="start" textLength="189.6" lengthAdjust="spacingAndGlyphs"  style="stroke:#fce4d6;stroke-width:0.5">ID (fomula 1)</text>
<text x="741.94" y="557.3" font-size="31.5" fill="#fce4d6" font-weight="normal" text-anchor="start" textLength="201.6" lengthAdjust="spacingAndGlyphs"  style="stroke:#fce4d6;stroke-width:0.5">ID (formula 2)</text>
<text x="69.36" y="601.5" font-size="31.5" fill="#111" font-weight="normal" text-anchor="start" textLength="156.14" lengthAdjust="spacingAndGlyphs"  style="stroke:#111;stroke-width:0.5">Bob Handy</text>
<text x="69.33" y="647.0" font-size="31.5" fill="#111" font-weight="normal" text-anchor="start" textLength="179.69" lengthAdjust="spacingAndGlyphs"  style="stroke:#111;stroke-width:0.5">Hailey Beard</text>
<text x="70.39" y="692.5" font-size="31.5" fill="#111" font-weight="normal" text-anchor="start" textLength="146.12" lengthAdjust="spacingAndGlyphs"  style="stroke:#111;stroke-width:0.5">Jack Heinz</text>
<text x="70.37" y="737.5" font-size="31.5" fill="#111" font-weight="normal" text-anchor="start" textLength="166.64" lengthAdjust="spacingAndGlyphs"  style="stroke:#111;stroke-width:0.5">Sara Moore</text>
<text x="70.39" y="783.0" font-size="31.5" fill="#111" font-weight="normal" text-anchor="start" textLength="139.63" lengthAdjust="spacingAndGlyphs"  style="stroke:#111;stroke-width:0.5">Zack Ryan</text>
<text x="68.36" y="828.5" font-size="31.5" fill="#111" font-weight="normal" text-anchor="start" textLength="172.64" lengthAdjust="spacingAndGlyphs"  style="stroke:#111;stroke-width:0.5">Lola Brigeda</text>
<text x="69.34" y="873.5" font-size="31.5" fill="#111" font-weight="normal" text-anchor="start" textLength="218.18" lengthAdjust="spacingAndGlyphs"  style="stroke:#111;stroke-width:0.5">Beau Handford</text>
<text x="1154.49" y="600.8" font-size="31.5" fill="#111" font-weight="bold" text-anchor="start" textLength="127.51" lengthAdjust="spacingAndGlyphs"  style="">SheetList</text>
<text x="1153.46" y="646.7" font-size="31.5" fill="#111" font-weight="normal" text-anchor="start" textLength="249.54" lengthAdjust="spacingAndGlyphs"  style="stroke:#111;stroke-width:0.5">Multiple Sheets-2</text>
<text x="1153.46" y="692.2" font-size="31.5" fill="#111" font-weight="normal" text-anchor="start" textLength="249.54" lengthAdjust="spacingAndGlyphs"  style="stroke:#111;stroke-width:0.5">Multiple Sheets-3</text>
<text x="1153.47" y="737.2" font-size="31.5" fill="#111" font-weight="normal" text-anchor="start" textLength="248.53" lengthAdjust="spacingAndGlyphs"  style="stroke:#111;stroke-width:0.5">Multiple Sheets-4</text>
<rect x="1366.5" y="754.5" width="50" height="50" fill="#ffffff" stroke="#c8c8c8" stroke-width="1.5" />
<path d="M1376.5,769 L1380,760 H1388.5 L1384,766 H1387.5 L1380,772 Z" fill="#f3dc9a"/>
<rect x="1389.5" y="765" width="16.5" height="3.6" fill="#9a9a9a" />
<rect x="1376" y="772" width="30" height="23" fill="#fff" stroke="#a8a8a8" stroke-width="1.2"/>
<rect x="1380" y="781" width="21" height="3.7" fill="#8fb0dc" />
<rect x="1380" y="787.3" width="21" height="3.7" fill="#a9bdb3" />
<rect x="1425" y="0" width="24" height="885" fill="#ffffff" />
<rect x="6.3" y="298.6" width="258.5" height="77.3" rx="14" fill="none" stroke="#f0131b" stroke-width="5.8"/>
<rect x="1118.5" y="547" width="325.5" height="226.5" rx="32" fill="none" stroke="#f0131b" stroke-width="6"/>
<line x1="278" y1="341" x2="1136" y2="617" stroke="#f0131b" stroke-width="8.5"/>
<polygon points="1155,623.5 1135.4,604.4 1126,627.6" fill="#f0131b"/>
</svg>
</body></html>
